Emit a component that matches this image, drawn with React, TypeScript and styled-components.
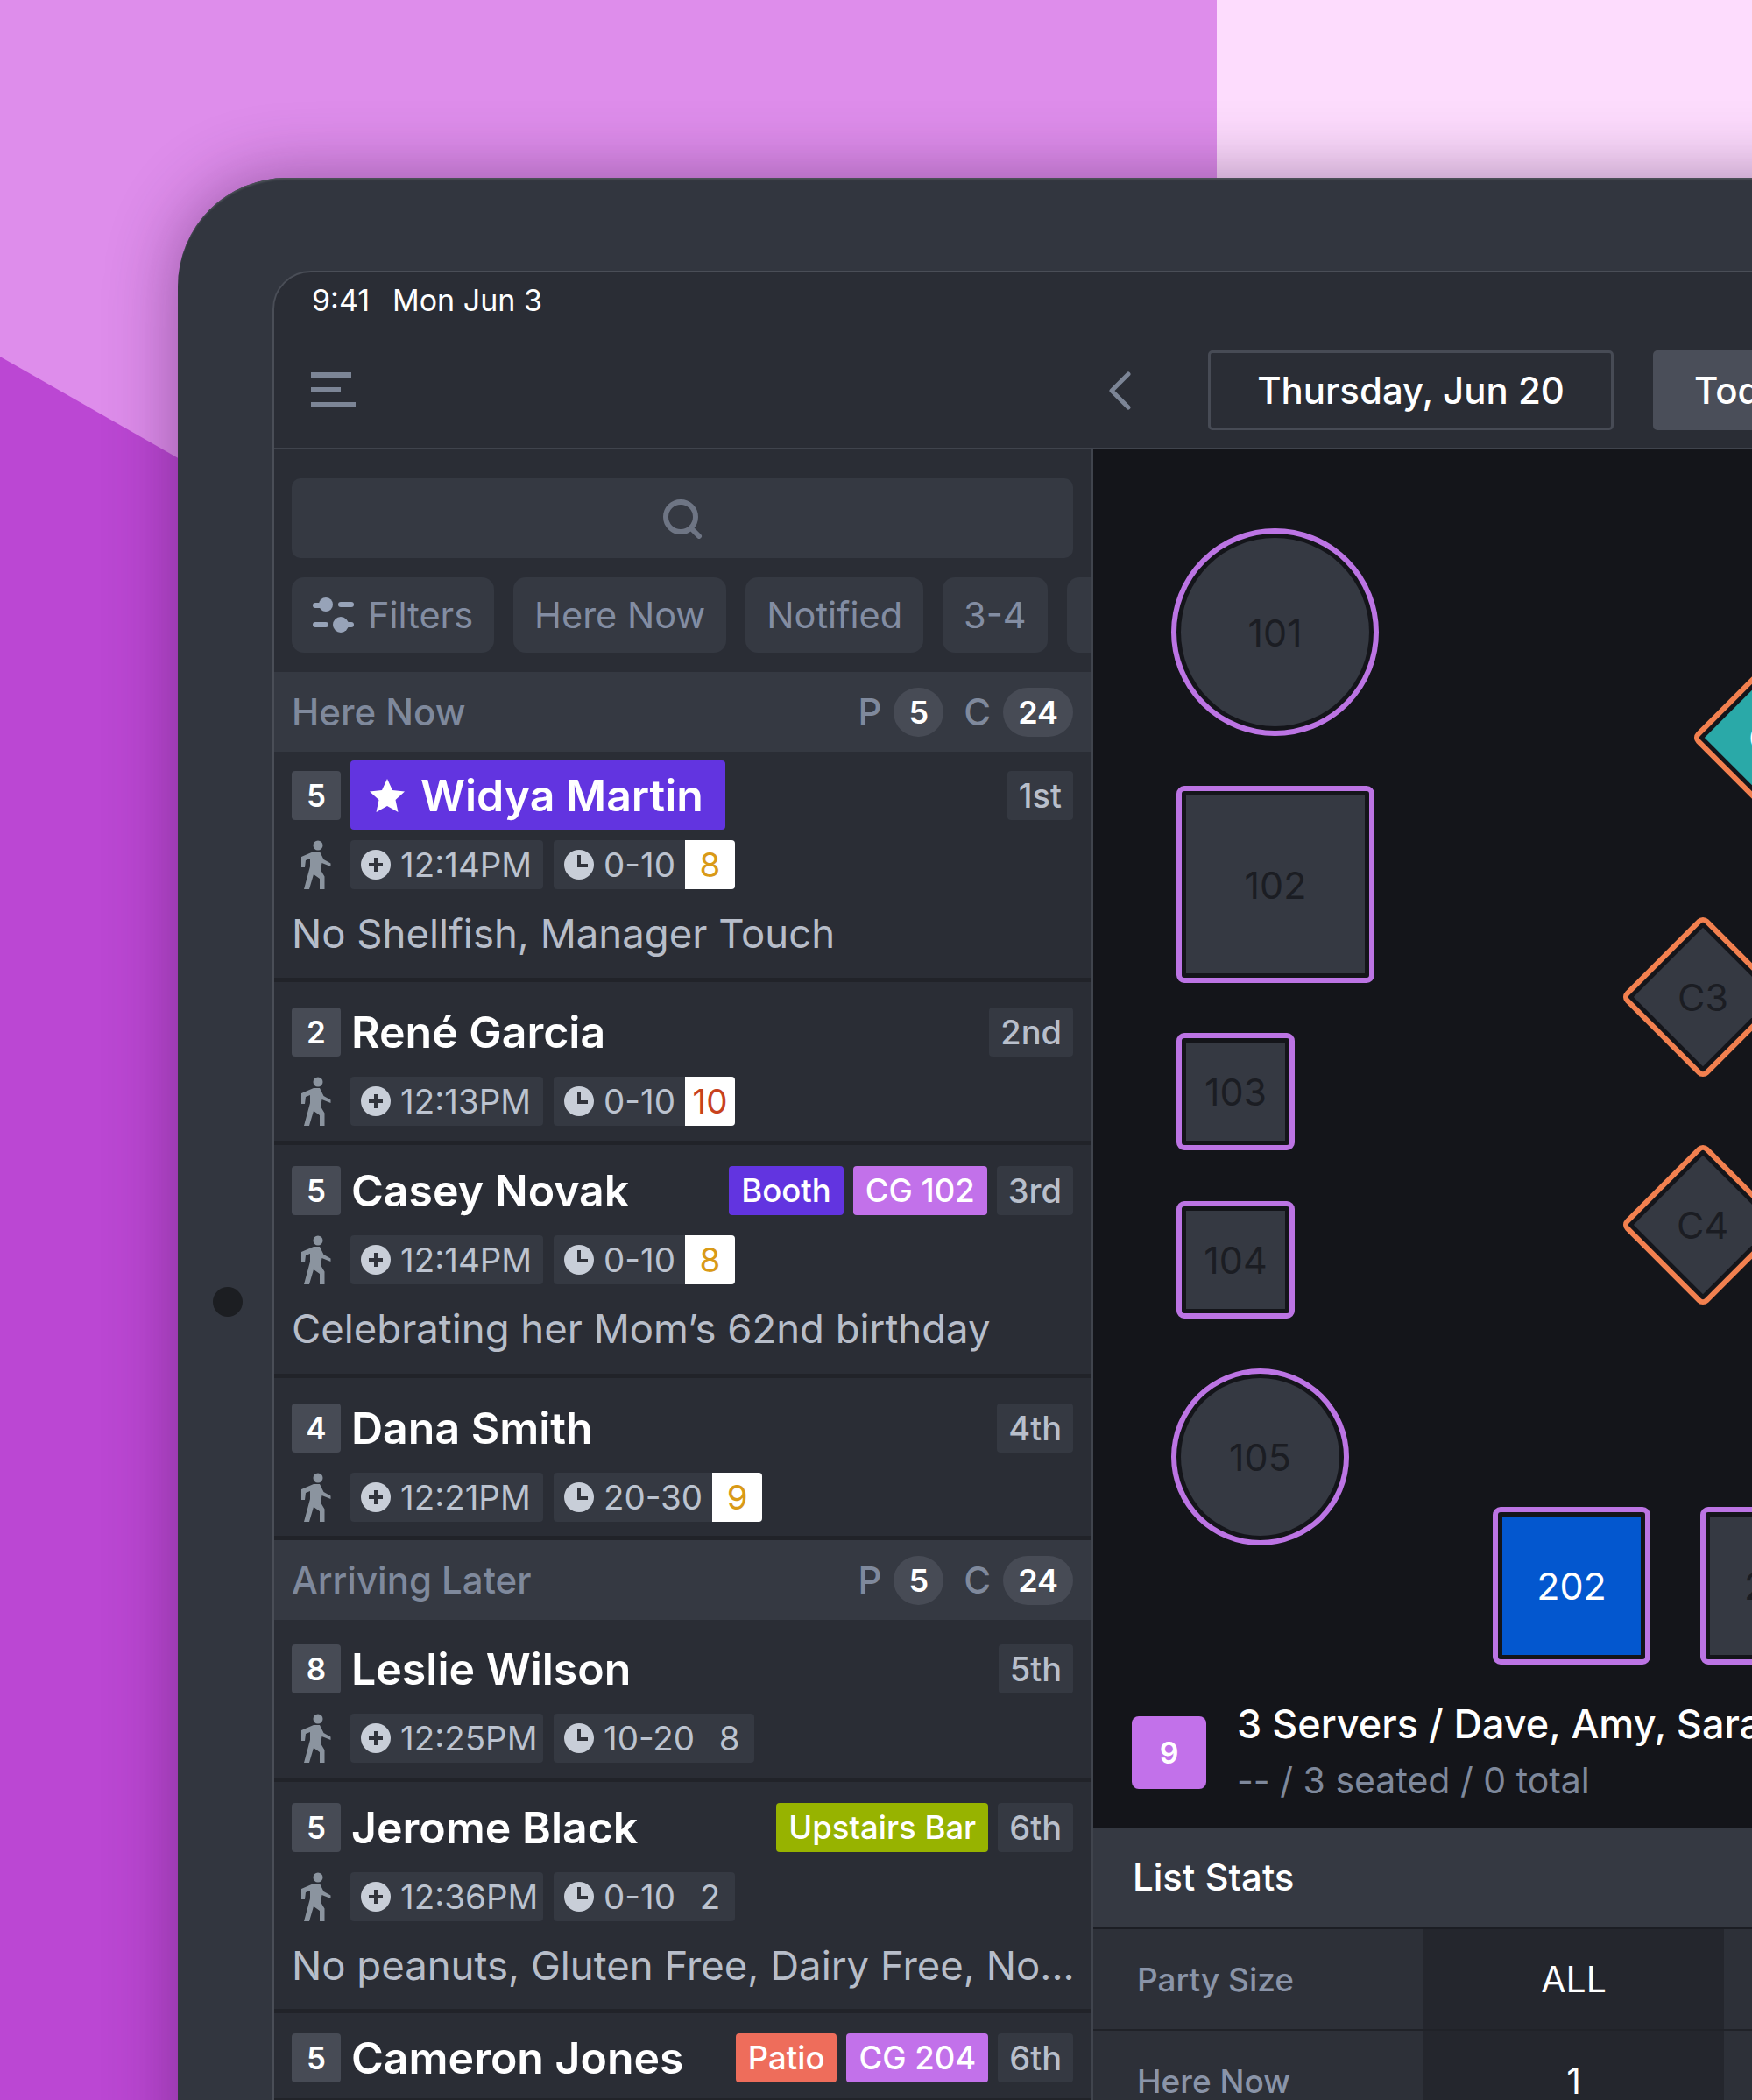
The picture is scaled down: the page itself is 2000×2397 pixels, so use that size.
import styled, { createGlobalStyle } from 'styled-components';

const GlobalStyle = createGlobalStyle`
  html, body {
    margin: 0;
    padding: 0;
    background: #de8deb;
  }
  * {
    box-sizing: border-box;
  }
`;

const Page = styled.div`
  position: relative;
  width: 2000px;
  height: 2397px;
  overflow: hidden;
  padding: 203px 0 0 203px;
  background: #de8deb;
  font-family: Inter, 'Noto Sans', sans-serif;

  &::before {
    content: '';
    position: absolute;
    inset: 0;
    background: #bb47d3;
    clip-path: polygon(0 407px, 400px 635px, 400px 100%, 0 100%);
  }

  &::after {
    content: '';
    position: absolute;
    top: 0;
    right: 0;
    width: 611px;
    height: 220px;
    background: #fddcfd;
  }
`;

const Device = styled.div`
  position: relative;
  z-index: 1;
  display: flex;
  width: 2100px;
  height: 2566px;
  border-radius: 124px 0 0 124px;
  padding: 106px 0;
  background: #32363f;
  box-shadow: inset 0 3px 2px -1px #4c5158, 0 0 80px rgba(60, 20, 70, 0.45);
`;

const Bezel = styled.div`
  flex: none;
  width: 108px;
  display: flex;
  align-items: center;
  justify-content: center;
  padding-left: 6px;
`;

const Camera = styled.div`
  width: 34px;
  height: 34px;
  border-radius: 50%;
  background: #1c1e22;
`;

const Screen = styled.div`
  flex: 1;
  min-width: 0;
  display: flex;
  flex-direction: column;
  border: 2px solid #4a4e57;
  border-radius: 44px 0 0 44px;
  background: #2a2d35;
  overflow: hidden;
`;

const StatusBar = styled.div`
  flex: none;
  height: 84px;
  display: flex;
  gap: 26px;
  padding: 11px 0 0 43px;
  color: #fff;
  font-size: 34px;
  line-height: 42px;
`;

const TopBar = styled.div`
  flex: none;
  height: 118px;
  display: flex;
  align-items: flex-start;
  padding: 5px 0 0 42px;
  border-bottom: 2px solid #40444d;
`;

const MenuIcon = styled.svg`
  flex: none;
  width: 51px;
  height: 41px;
  margin-top: 25px;
`;

const BackIcon = styled.svg`
  flex: none;
  width: 28px;
  height: 44px;
  margin: 24px 0 0 858px;
`;

const DateBox = styled.div`
  flex: none;
  width: 463px;
  height: 91px;
  margin-left: 87px;
  display: flex;
  align-items: center;
  justify-content: center;
  border: 3px solid #474b55;
  border-radius: 5px;
  color: #fff;
  font-size: 42px;
  font-weight: 500;
`;

const TodayButton = styled.div`
  flex: none;
  width: 220px;
  height: 91px;
  margin-left: 45px;
  padding-left: 47px;
  display: flex;
  align-items: center;
  border-radius: 5px;
  background: #4a4e59;
  color: #fff;
  font-size: 42px;
  font-weight: 500;
`;

const Main = styled.div`
  flex: 1;
  min-height: 0;
  display: flex;
`;

const ListPane = styled.div`
  flex: none;
  width: 935px;
  border-right: 2px solid #40444d;
  overflow: hidden;
`;

const SearchWrap = styled.div`
  padding: 33px 21px 22px 20px;
`;

const SearchBox = styled.div`
  height: 91px;
  display: flex;
  align-items: center;
  justify-content: center;
  border-radius: 10px;
  background: #353942;
`;

const FilterRow = styled.div`
  display: flex;
  gap: 22px;
  padding: 0 0 22px 20px;
  overflow: hidden;
`;

const FilterPill = styled.div`
  flex: none;
  min-width: 60px;
  height: 86px;
  display: flex;
  align-items: center;
  gap: 15px;
  padding: 0 24px;
  border-radius: 14px;
  background: #353942;
  color: #838da2;
  font-size: 41.5px;
`;

const SectionBar = styled.div`
  height: 91px;
  display: flex;
  align-items: center;
  padding: 0 21px 0 20px;
  background: #353942;
  color: #7f899c;
  font-size: 42px;
  font-weight: 500;
`;

const SectionTitle = styled.div`
  flex: 1;
`;

const CountLetter = styled.span`
  margin: 0 14px 0 23px;
`;

const CountPill = styled.span`
  min-width: 57px;
  height: 56px;
  padding: 0 17px;
  display: flex;
  align-items: center;
  justify-content: center;
  border-radius: 28px;
  background: #474b55;
  color: #fff;
  font-size: 36px;
  font-weight: 600;
`;

const Row = styled.div<{ $top: number; $bottom: number }>`
  padding: ${(p) => p.$top}px 21px ${(p) => p.$bottom}px 20px;
  border-bottom: 5px solid #212329;
`;

const RowHead = styled.div`
  display: flex;
  align-items: center;
  gap: 11px;
`;

const Party = styled.div`
  flex: none;
  width: 56px;
  height: 56px;
  display: flex;
  align-items: center;
  justify-content: center;
  border-radius: 4px;
  background: #474b55;
  color: #fff;
  font-size: 35px;
  font-weight: 600;
`;

const Name = styled.div<{ $vip?: boolean }>`
  display: flex;
  align-items: center;
  gap: 17px;
  height: ${(p) => (p.$vip ? '79px' : '56px')};
  padding: ${(p) => (p.$vip ? '0 25px 0 21px' : '0 0 0 1px')};
  border-radius: 4px;
  background: ${(p) => (p.$vip ? '#6234e0' : 'transparent')};
  color: #fff;
  font-size: 50px;
  font-weight: 600;
  white-space: nowrap;
`;

const Tags = styled.div`
  flex: 1;
  display: flex;
  justify-content: flex-end;
  gap: 11px;
`;

const Tag = styled.div<{ $color: string }>`
  height: 56px;
  padding: 0 14px;
  display: flex;
  align-items: center;
  border-radius: 4px;
  background: ${(p) => p.$color};
  color: #fff;
  font-size: 36.5px;
  font-weight: 500;
  white-space: nowrap;
`;

const Position = styled.div`
  height: 56px;
  padding: 0 13px;
  display: flex;
  align-items: center;
  border-radius: 4px;
  background: #353942;
  color: #b8bfcb;
  font-size: 38px;
  font-weight: 500;
`;

const MetaRow = styled.div<{ $gap: number }>`
  display: flex;
  align-items: center;
  gap: 12px;
  margin-top: ${(p) => p.$gap}px;
`;

const WalkSlot = styled.div`
  flex: none;
  width: 55px;
  height: 56px;
  display: flex;
  justify-content: center;
`;

const Chip = styled.div<{ $wide?: boolean }>`
  flex: none;
  height: 56px;
  display: flex;
  align-items: center;
  gap: 11px;
  width: ${(p) => (p.$wide ? '220px' : 'auto')};
  padding-left: 12px;
  border-radius: 4px;
  background: #353942;
  color: #bcc3cf;
  font-size: 38.5px;
  white-space: nowrap;
`;

const Wait = styled.div<{ $color?: string }>`
  width: 57px;
  height: 56px;
  display: flex;
  align-items: center;
  justify-content: center;
  border-radius: 0 4px 4px 0;
  background: ${(p) => (p.$color ? '#fff' : 'transparent')};
  color: ${(p) => p.$color ?? '#bcc3cf'};
`;

const Note = styled.div`
  margin-top: 23px;
  line-height: 56px;
  color: #b7bdc9;
  font-size: 45.5px;
  white-space: nowrap;
`;

const RightPane = styled.div`
  flex: 1;
  min-width: 0;
  display: flex;
  flex-direction: column;
`;

const Map = styled.div`
  flex: none;
  height: 1573px;
  display: flex;
  flex-direction: column;
  background: #14151a;
`;

const Canvas = styled.div`
  position: relative;
  flex: 1;
`;

const TableShape = styled.div<{
  $x: number;
  $y: number;
  $w: number;
  $h: number;
  $ring: string;
  $fill: string;
  $round?: boolean;
  $diamond?: boolean;
  $light?: boolean;
}>`
  position: absolute;
  left: ${(p) => p.$x}px;
  top: ${(p) => p.$y}px;
  width: ${(p) => p.$w}px;
  height: ${(p) => p.$h}px;
  display: flex;
  align-items: center;
  justify-content: center;
  border: 6px solid ${(p) => p.$ring};
  padding: 5px;
  border-radius: ${(p) => (p.$round ? '50%' : '9px')};
  background: ${(p) => p.$fill};
  background-clip: content-box;
  transform: ${(p) => (p.$diamond ? 'rotate(45deg)' : 'none')};
  color: ${(p) => (p.$light ? '#fff' : '#1b1d23')};
  font-size: 43px;
`;

const TableLabel = styled.span<{ $diamond?: boolean }>`
  transform: ${(p) => (p.$diamond ? 'rotate(-45deg)' : 'none')};
`;

const ServerRow = styled.div`
  flex: none;
  display: flex;
  align-items: center;
  gap: 35px;
  padding: 0 0 22px 44px;
  white-space: nowrap;
`;

const ServerSquare = styled.div`
  flex: none;
  width: 85px;
  height: 83px;
  display: flex;
  align-items: center;
  justify-content: center;
  border-radius: 8px;
  background: #c271ea;
  color: #fff;
  font-size: 34px;
  font-weight: 600;
`;

const ServerTitle = styled.div`
  line-height: 64px;
  color: #fff;
  font-size: 45px;
  font-weight: 500;
`;

const ServerSub = styled.div`
  line-height: 64px;
  color: #7e889b;
  font-size: 41px;
`;

const StatsHead = styled.div`
  flex: none;
  height: 116px;
  display: flex;
  align-items: center;
  padding-left: 45px;
  border-bottom: 3px solid #1c1e24;
  background: #353942;
  color: #fff;
  font-size: 42px;
  font-weight: 500;
`;

const StatsRow = styled.div`
  flex: none;
  height: 116px;
  display: grid;
  grid-template-columns: 377px 343px 1fr;
  border-bottom: 2px solid #202228;
`;

const StatLabel = styled.div`
  display: flex;
  align-items: center;
  padding-left: 50px;
  background: #2d3038;
  color: #8a94a8;
  font-size: 37px;
  font-weight: 500;
`;

const StatValue = styled.div`
  display: flex;
  align-items: center;
  justify-content: center;
  background: #24262d;
  color: #fff;
  font-size: 41px;
`;

const StatRest = styled.div`
  background: #2d3038;
`;

const SearchIcon = () => (
  <svg width="46" height="46" viewBox="0 0 46 46" fill="none" stroke="#6e7584" strokeWidth="6" strokeLinecap="round">
    <circle cx="21" cy="21" r="17" />
    <path d="M33 34l9 9" />
  </svg>
);

const SlidersIcon = () => (
  <svg width="48" height="42" viewBox="0 0 48 42" fill="#97a3b8">
    <rect x="0" y="7" width="20" height="6" rx="3" />
    <circle cx="15" cy="9" r="8" />
    <rect x="29" y="6" width="18" height="6" rx="3" />
    <rect x="0" y="29" width="18" height="6" rx="3" />
    <circle cx="32" cy="32" r="9" />
    <rect x="30" y="29" width="17" height="6" rx="3" />
  </svg>
);

const StarIcon = () => (
  <svg width="42" height="40" viewBox="0 0 42 40" fill="#fff">
    <path d="M21 1l6 13 14 1.600-10.500 9.400 3 14L21 32l-12.500 7 3-14L1 15.600 15 14z" />
  </svg>
);

const WalkIcon = () => (
  <svg width="35" height="56" viewBox="0 0 35 56" fill="#8b949f">
    <circle cx="20" cy="6" r="5.500" />
    <path d="M15 13h7l4.500 9 8 4.500v3.500l-10-4-1.500 8 4.500 7.500V56h-5.500V44l-7-5L10 56H4l7-26v-9l-5 2-1 8H1V19z" />
  </svg>
);

const PlusIcon = () => (
  <svg width="34" height="34" viewBox="0 0 34 34">
    <circle cx="17" cy="17" r="17" fill="#c8ced8" />
    <path d="M17 9v16M9 17h16" stroke="#30333b" strokeWidth="4" />
  </svg>
);

const ClockIcon = () => (
  <svg width="34" height="34" viewBox="0 0 34 34">
    <circle cx="17" cy="17" r="17" fill="#c8ced8" />
    <path d="M17 6v12h10" stroke="#30333b" strokeWidth="4" fill="none" />
  </svg>
);

const amber = '#d99a17';
const red = '#c8421d';

type Guest = {
  party: number;
  name: string;
  vip?: boolean;
  tags?: [string, string][];
  place: string;
  time?: string;
  wait?: string;
  count?: string;
  countColor?: string;
  note?: string;
  top: number;
  bottom: number;
  metaGap?: number;
};

const hereNow: Guest[] = [
  { party: 5, name: 'Widya Martin', vip: true, place: '1st', time: '12:14PM', wait: '0-10', count: '8', countColor: amber, note: 'No Shellfish, Manager Touch', top: 10, bottom: 22, metaGap: 12 },
  { party: 2, name: 'René Garcia', place: '2nd', time: '12:13PM', wait: '0-10', count: '10', countColor: red, top: 29, bottom: 17 },
  { party: 5, name: 'Casey Novak', tags: [['Booth', '#6234e0'], ['CG 102', '#c271ea']], place: '3rd', time: '12:14PM', wait: '0-10', count: '8', countColor: amber, note: 'Celebrating her Mom’s 62nd birthday', top: 24, bottom: 23 },
  { party: 4, name: 'Dana Smith', place: '4th', time: '12:21PM', wait: '20-30', count: '9', countColor: amber, top: 29, bottom: 16 },
];

const arrivingLater: Guest[] = [
  { party: 8, name: 'Leslie Wilson', place: '5th', time: '12:25PM', wait: '10-20', count: '8', top: 28, bottom: 17 },
  { party: 5, name: 'Jerome Black', tags: [['Upstairs Bar', '#97b300']], place: '6th', time: '12:36PM', wait: '0-10', count: '2', note: 'No peanuts, Gluten Free, Dairy Free, No...', top: 24, bottom: 21 },
  { party: 5, name: 'Cameron Jones', tags: [['Patio', '#ee6d5b'], ['CG 204', '#c271ea']], place: '6th', top: 23, bottom: 18 },
];

const purple = '#bc74e4';
const orange = '#f2804f';
const slate = '#353942';

const tables = [
  { label: '101', x: 89, y: 90, w: 237, h: 237, ring: purple, fill: slate, round: true },
  { label: '102', x: 95, y: 384, w: 226, h: 225, ring: purple, fill: slate },
  { label: '103', x: 95, y: 666, w: 135, h: 134, ring: purple, fill: slate },
  { label: '104', x: 95, y: 858, w: 135, h: 134, ring: purple, fill: slate },
  { label: '105', x: 89, y: 1049, w: 203, h: 202, ring: purple, fill: slate, round: true },
  { label: '202', x: 456, y: 1207, w: 180, h: 180, ring: purple, fill: '#0357cf', light: true },
  { label: '203', x: 693, y: 1207, w: 180, h: 180, ring: purple, fill: slate },
  { label: 'C2', x: 710, y: 262, w: 134, h: 134, ring: orange, fill: '#2aa9a8', diamond: true, light: true },
  { label: 'C3', x: 629, y: 558, w: 134, h: 134, ring: orange, fill: slate, diamond: true },
  { label: 'C4', x: 629, y: 818, w: 134, h: 134, ring: orange, fill: slate, diamond: true },
];

function GuestRow({ guest }: { guest: Guest }) {
  return (
    <Row $top={guest.top} $bottom={guest.bottom}>
      <RowHead>
        <Party>{guest.party}</Party>
        <Name $vip={guest.vip}>
          {guest.vip ? <StarIcon /> : null}
          {guest.name}
        </Name>
        <Tags>
          {guest.tags?.map(([text, color]) => (
            <Tag key={text} $color={color}>
              {text}
            </Tag>
          ))}
        </Tags>
        <Position>{guest.place}</Position>
      </RowHead>
      {guest.time ? (
        <MetaRow $gap={guest.metaGap ?? 23}>
          <WalkSlot>
            <WalkIcon />
          </WalkSlot>
          <Chip $wide>
            <PlusIcon />
            {guest.time}
          </Chip>
          <Chip>
            <ClockIcon />
            {guest.wait}
            <Wait $color={guest.countColor}>{guest.count}</Wait>
          </Chip>
        </MetaRow>
      ) : null}
      {guest.note ? <Note>{guest.note}</Note> : null}
    </Row>
  );
}

function SectionHeader({ title }: { title: string }) {
  return (
    <SectionBar>
      <SectionTitle>{title}</SectionTitle>
      <CountLetter>P</CountLetter>
      <CountPill>5</CountPill>
      <CountLetter>C</CountLetter>
      <CountPill>24</CountPill>
    </SectionBar>
  );
}

export default function App() {
  return (
    <>
      <GlobalStyle />
      <Page>
        <Device>
          <Bezel>
            <Camera />
          </Bezel>
          <Screen>
            <StatusBar>
              <span>9:41</span>
              <span>Mon Jun 3</span>
            </StatusBar>
            <TopBar>
              <MenuIcon viewBox="0 0 51 41" fill="#7c8596">
                <rect x="0" y="0" width="46" height="6" />
                <rect x="0" y="17" width="34" height="6" />
                <rect x="0" y="34" width="51" height="6" />
              </MenuIcon>
              <BackIcon viewBox="0 0 28 44" fill="none" stroke="#7c8596" strokeWidth="5" strokeLinecap="round" strokeLinejoin="round">
                <path d="M24 3L5 22l19 19" />
              </BackIcon>
              <DateBox>Thursday, Jun 20</DateBox>
              <TodayButton>Today</TodayButton>
            </TopBar>
            <Main>
              <ListPane>
                <SearchWrap>
                  <SearchBox>
                    <SearchIcon />
                  </SearchBox>
                </SearchWrap>
                <FilterRow>
                  <FilterPill>
                    <SlidersIcon />
                    Filters
                  </FilterPill>
                  <FilterPill>Here Now</FilterPill>
                  <FilterPill>Notified</FilterPill>
                  <FilterPill>3-4</FilterPill>
                  <FilterPill />
                </FilterRow>
                <SectionHeader title="Here Now" />
                {hereNow.map((guest) => (
                  <GuestRow key={guest.name} guest={guest} />
                ))}
                <SectionHeader title="Arriving Later" />
                {arrivingLater.map((guest) => (
                  <GuestRow key={guest.name} guest={guest} />
                ))}
              </ListPane>
              <RightPane>
                <Map>
                  <Canvas>
                    {tables.map((t) => (
                      <TableShape
                        key={t.label}
                        $x={t.x}
                        $y={t.y}
                        $w={t.w}
                        $h={t.h}
                        $ring={t.ring}
                        $fill={t.fill}
                        $round={t.round}
                        $diamond={t.diamond}
                        $light={t.light}
                      >
                        <TableLabel $diamond={t.diamond}>{t.label}</TableLabel>
                      </TableShape>
                    ))}
                  </Canvas>
                  <ServerRow>
                    <ServerSquare>9</ServerSquare>
                    <div>
                      <ServerTitle>3 Servers / Dave, Amy, Sarah</ServerTitle>
                      <ServerSub>-- / 3 seated / 0 total</ServerSub>
                    </div>
                  </ServerRow>
                </Map>
                <StatsHead>List Stats</StatsHead>
                <StatsRow>
                  <StatLabel>Party Size</StatLabel>
                  <StatValue>ALL</StatValue>
                  <StatRest />
                </StatsRow>
                <StatsRow>
                  <StatLabel>Here Now</StatLabel>
                  <StatValue>1</StatValue>
                  <StatRest />
                </StatsRow>
              </RightPane>
            </Main>
          </Screen>
        </Device>
      </Page>
    </>
  );
}
